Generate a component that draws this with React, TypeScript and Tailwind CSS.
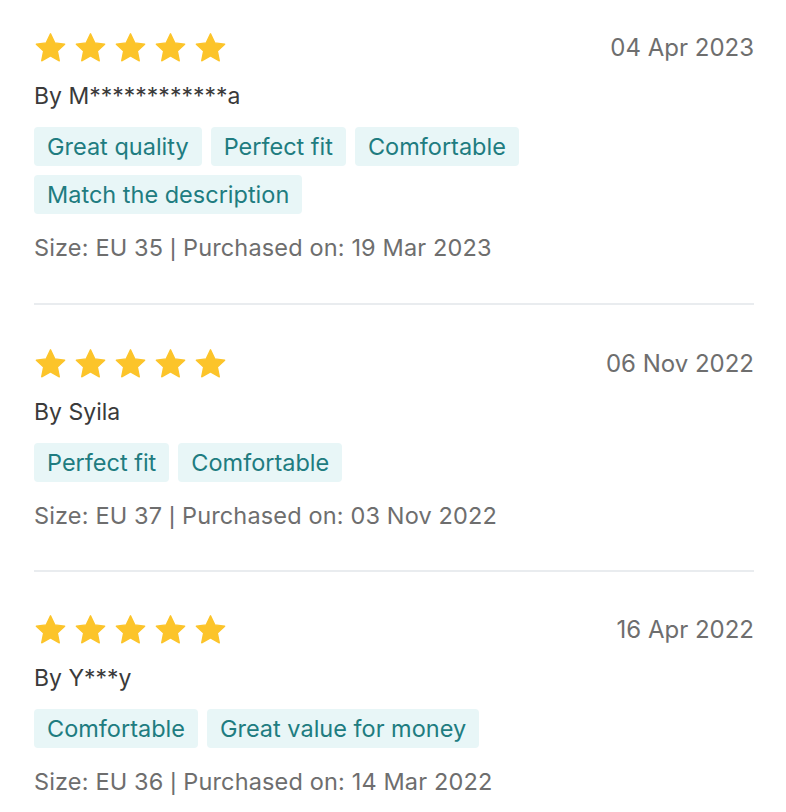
import React from "react";

type Review = {
  date: string;
  name: string;
  tags: string[];
  size: string;
  purchased: string;
};

const reviews: Review[] = [
  {
    date: "04 Apr 2023",
    name: "By M************a",
    tags: ["Great quality", "Perfect fit", "Comfortable", "Match the description"],
    size: "EU 35",
    purchased: "19 Mar 2023",
  },
  {
    date: "06 Nov 2022",
    name: "By Syila",
    tags: ["Perfect fit", "Comfortable"],
    size: "EU 37",
    purchased: "03 Nov 2022",
  },
  {
    date: "16 Apr 2022",
    name: "By Y***y",
    tags: ["Comfortable", "Great value for money"],
    size: "EU 36",
    purchased: "14 Mar 2022",
  },
];

function Star() {
  return (
    <svg width="33" height="32" viewBox="0 0 24 23" className="block">
      <path
        d="M12 1.2l3.1 6.6 7.2.9-5.3 5 1.4 7.1L12 17.3l-6.4 3.5 1.4-7.1-5.3-5 7.2-.9z"
        fill="#fcc42a"
        stroke="#fcc42a"
        strokeWidth="1"
        strokeLinejoin="round"
      />
    </svg>
  );
}

export default function App() {
  return (
    <div
      className="w-[786px] min-h-[812px] bg-white pl-[34px] pr-[32px]"
      style={{ fontFamily: 'Inter, "Liberation Sans", Arial, sans-serif' }}
    >
      {reviews.map((r, i) => (
        <div
          key={i}
          className={
            i === 0
              ? "pt-[32px] pb-[40px] border-b-2 border-[#e9ecef]"
              : i === reviews.length - 1
              ? "pt-[42px] pb-[20px]"
              : "pt-[43px] pb-[39px] border-b-2 border-[#e9ecef]"
          }
        >
          <div className="flex h-[32px] items-center justify-between">
            <div className="flex gap-[7px]">
              <Star />
              <Star />
              <Star />
              <Star />
              <Star />
            </div>
            <div className="text-[24px] leading-[30px] text-[#6e6e6e]">{r.date}</div>
          </div>
          <div className="mt-[17px] text-[23px] leading-[30px] text-[#3a3a3a]">{r.name}</div>
          <div className="mt-[16px] flex flex-wrap gap-x-[9px] gap-y-[9px]">
            {r.tags.map((t) => (
              <span
                key={t}
                className="flex h-[39px] items-center rounded-[4px] bg-[#e8f6f7] px-[13px] text-[23.5px] text-[#207c80]"
              >
                {t}
              </span>
            ))}
          </div>
          <div className="mt-[19px] text-[23.5px] leading-[30px] tracking-[0.15px] text-[#6e6e6e]">
            Size: {r.size}{" "}
            <span style={{ fontFamily: '"Liberation Sans", Arial, sans-serif' }}>|</span>{" "}
            Purchased on: {r.purchased}
          </div>
        </div>
      ))}
    </div>
  );
}
